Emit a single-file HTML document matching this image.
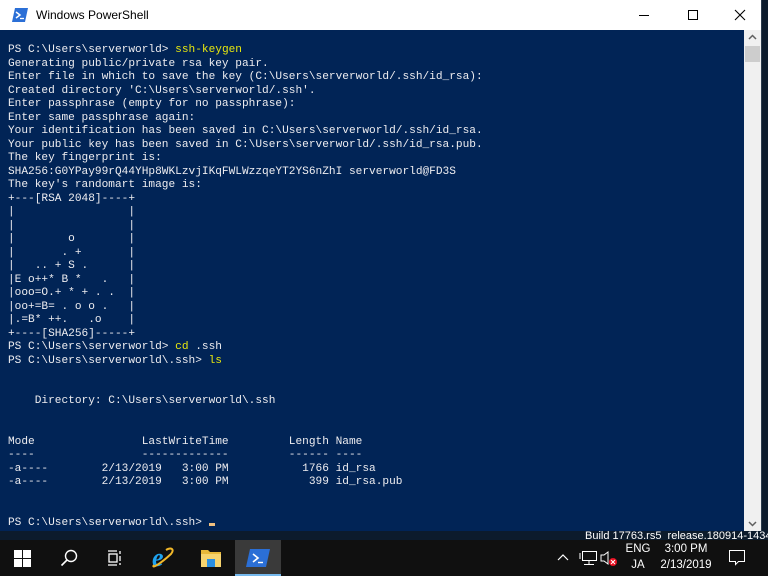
<!DOCTYPE html>
<html><head><meta charset="utf-8"><style>
*{margin:0;padding:0;box-sizing:border-box}
html,body{width:768px;height:576px;overflow:hidden;background:#0c1b2c;font-family:"Liberation Sans",sans-serif}
#win{position:absolute;left:0;top:0;width:762px;height:531px;background:#012456;border-right:1px solid #2a3a4c}
#title{position:absolute;left:0;top:0;width:761px;height:30px;background:#fff}
#title .t{position:absolute;left:36px;top:8px;font-size:12px;color:#000}
#con{position:absolute;left:8px;top:44px;font-family:"Liberation Mono",monospace;font-size:11.15px;line-height:13.5px;color:#eeedf0;white-space:pre}
.y{color:#e8e80e}
#sb{position:absolute;left:744px;top:30px;width:17px;height:501px;background:#f0f0f0}
#thumb{position:absolute;left:1px;top:16px;width:15px;height:16px;background:#cdcdcd}
#build{position:absolute;left:585px;top:530px;font-size:11px;color:#fff;white-space:nowrap}
#tb{position:absolute;left:0;top:540px;width:768px;height:36px;background:#101010;z-index:2}
.tr{position:absolute;color:#fff;font-size:11.5px;text-align:center}
</style></head><body>
<div id="win">
<div id="title">
<svg style="position:absolute;left:12px;top:8px" width="16" height="14"><polygon points="3,0 16,0 13,14 0,14" fill="#2b6fd6"/><path d="M4 4 L8 7 L4 10" stroke="#fff" stroke-width="1.5" fill="none"/><path d="M8 10.5h4" stroke="#fff" stroke-width="1.3"/></svg>
<div class="t">Windows PowerShell</div>
<svg style="position:absolute;left:636px;top:8px" width="120" height="14"><path d="M3 7.5h10" stroke="#000"/><rect x="52.5" y="2.5" width="9" height="9" fill="none" stroke="#000"/><path d="M99 2l10 10M109 2l-10 10" stroke="#000" stroke-width="1.1"/></svg>
</div>
<div id="con">PS C:\Users\serverworld&gt; <span class="y">ssh-keygen</span>
Generating public/private rsa key pair.
Enter file in which to save the key (C:\Users\serverworld/.ssh/id_rsa):
Created directory 'C:\Users\serverworld/.ssh'.
Enter passphrase (empty for no passphrase):
Enter same passphrase again:
Your identification has been saved in C:\Users\serverworld/.ssh/id_rsa.
Your public key has been saved in C:\Users\serverworld/.ssh/id_rsa.pub.
The key fingerprint is:
SHA256:G0YPay99rQ44YHp8WKLzvjIKqFWLWzzqeYT2YS6nZhI serverworld@FD3S
The key's randomart image is:
+---[RSA 2048]----+
|                 |
|                 |
|        o        |
|       . +       |
|   .. + S .      |
|E o++* B *   .   |
|ooo=O.+ * + . .  |
|oo+=B= . o o .   |
|.=B* ++.   .o    |
+----[SHA256]-----+
PS C:\Users\serverworld&gt; <span class="y">cd</span> .ssh
PS C:\Users\serverworld\.ssh&gt; <span class="y">ls</span>


    Directory: C:\Users\serverworld\.ssh


Mode                LastWriteTime         Length Name
----                -------------         ------ ----
-a----        2/13/2019   3:00 PM           1766 id_rsa
-a----        2/13/2019   3:00 PM            399 id_rsa.pub


PS C:\Users\serverworld\.ssh&gt; <span style="display:inline-block;width:6px;height:3px;background:#f0c080;vertical-align:-1px"></span></div>
<div id="sb"><svg style="position:absolute;left:4px;top:4px" width="9" height="6"><path d="M1 5l3.5-3.5L8 5" stroke="#606060" stroke-width="1.5" fill="none"/></svg><div id="thumb"></div>
<svg style="position:absolute;left:4px;top:491px" width="9" height="6"><path d="M1 1l3.5 3.5L8 1" stroke="#606060" stroke-width="1.5" fill="none"/></svg></div>
</div>
<div id="build">Build 17763.rs5_release.180914-1434</div>
<div id="tb">
<svg style="position:absolute;left:14px;top:10px" width="17" height="17" fill="#fff"><rect x="0" y="0" width="8" height="8"/><rect x="9" y="0" width="8" height="8"/><rect x="0" y="9" width="8" height="8"/><rect x="9" y="9" width="8" height="8"/></svg>
<svg style="position:absolute;left:60px;top:9px" width="18" height="18"><circle cx="11" cy="7" r="5.5" stroke="#fff" stroke-width="1.4" fill="none"/><path d="M7 11L1.5 16.5" stroke="#fff" stroke-width="1.6"/></svg>
<svg style="position:absolute;left:107px;top:10px" width="17" height="16" fill="none" stroke="#fff" stroke-width="1.3"><path d="M1 1h9M1 15h9"/><rect x="2" y="4" width="8" height="8"/><path d="M13 1v3M13 6v5M13 13v2"/></svg>
<div style="position:absolute;left:152px;top:6px;width:22px;height:24px;color:#1ea3f0;font:italic bold 26px 'Liberation Serif',serif;line-height:24px">e</div>
<svg style="position:absolute;left:151px;top:7px" width="24" height="22"><path d="M3 18C0 22 8 18 20 7C24 2 20 0 15 3" stroke="#f2b829" stroke-width="2" fill="none"/></svg>
<svg style="position:absolute;left:200px;top:8px" width="22" height="20"><path d="M1 2h7l2 2h11v15H1z" fill="#e8b83a"/><rect x="1" y="6" width="20" height="13" fill="#f6d36e"/><rect x="7" y="11" width="8" height="8" fill="#2a8ee0"/></svg>
<div style="position:absolute;left:235px;top:0;width:46px;height:36px;background:#3a3a3a;border-bottom:2px solid #76b9ed"></div>
<svg style="position:absolute;left:246px;top:9px" width="24" height="18"><polygon points="4,0 24,0 20,18 0,18" fill="#2b6fd6"/><path d="M7 5l5 4-5 4" stroke="#fff" stroke-width="1.6" fill="none"/><path d="M12 13.5h5" stroke="#fff" stroke-width="1.4"/></svg>
<svg style="position:absolute;left:557px;top:13px" width="12" height="8"><path d="M1 7l5-5 5 5" stroke="#fff" stroke-width="1.2" fill="none"/></svg>
<svg style="position:absolute;left:579px;top:10px" width="20" height="16" fill="none" stroke="#fff"><rect x="3.5" y="1.5" width="14" height="9"/><path d="M10 11v3M5 14.5h10M1 3v6"/></svg>
<svg style="position:absolute;left:600px;top:10px" width="18" height="17"><path d="M1 5h3l4-3v12l-4-3H1z" fill="none" stroke="#fff"/><circle cx="13" cy="12" r="4" fill="#e81123"/><path d="M11 10l4 4M15 10l-4 4" stroke="#fff"/></svg>
<div class="tr" style="left:624px;top:3px;width:28px">ENG</div>
<div class="tr" style="left:624px;top:19px;width:28px">JA</div>
<div class="tr" style="left:656px;top:3px;width:60px">3:00 PM</div>
<div class="tr" style="left:656px;top:19px;width:60px">2/13/2019</div>
<svg style="position:absolute;left:728px;top:9px" width="18" height="18"><path d="M1.5 1.5h15v11h-6l-3 3v-3h-6z" fill="none" stroke="#fff"/></svg>
</div>
</body></html>
